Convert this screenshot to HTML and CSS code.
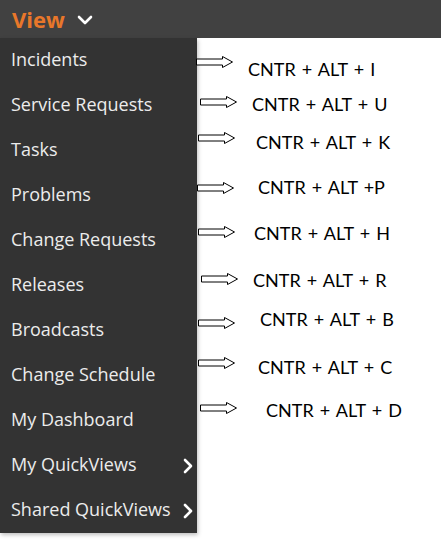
FILE: index.html
```html
<!DOCTYPE html>
<html>
<head>
<meta charset="utf-8">
<link rel="stylesheet" href="styles.css">
</head>
<body>
<header class="topbar">
  <span class="view-title">View</span>
  <svg class="chev-down" width="16" height="10" viewBox="0 0 16 10"><path d="M2 2 L8 8 L14 2" fill="none" stroke="#fff" stroke-width="2.6" stroke-linecap="round" stroke-linejoin="round"/></svg>
</header>
<div class="stage">
  <nav class="menu">
    <div class="item">Incidents</div>
    <div class="item">Service Requests</div>
    <div class="item">Tasks</div>
    <div class="item">Problems</div>
    <div class="item">Change Requests</div>
    <div class="item">Releases</div>
    <div class="item">Broadcasts</div>
    <div class="item">Change Schedule</div>
    <div class="item">My Dashboard</div>
    <div class="item sub">My QuickViews<svg class="chev-right" width="10" height="16" viewBox="0 0 10 16"><path d="M2 2 L8 8 L2 14" fill="none" stroke="#fff" stroke-width="2.6" stroke-linecap="round" stroke-linejoin="round"/></svg></div>
    <div class="item sub">Shared QuickViews<svg class="chev-right" width="10" height="16" viewBox="0 0 10 16"><path d="M2 2 L8 8 L2 14" fill="none" stroke="#fff" stroke-width="2.6" stroke-linecap="round" stroke-linejoin="round"/></svg></div>
  </nav>
  <section class="notes">
    <div class="note r1"><svg class="arrow" width="37" height="12" viewBox="0 0 37 12"><path d="M0.5 3 H26.5 V0.5 L36.5 6 L26.5 11.5 V9 H0.5 Z" fill="#fff" stroke="#000" stroke-width="1"/></svg><span class="keys">CNTR + ALT + I</span></div>
    <div class="note r2"><svg class="arrow" width="37" height="12" viewBox="0 0 37 12"><path d="M0.5 3 H26.5 V0.5 L36.5 6 L26.5 11.5 V9 H0.5 Z" fill="#fff" stroke="#000" stroke-width="1"/></svg><span class="keys">CNTR + ALT + U</span></div>
    <div class="note r3"><svg class="arrow" width="37" height="12" viewBox="0 0 37 12"><path d="M0.5 3 H26.5 V0.5 L36.5 6 L26.5 11.5 V9 H0.5 Z" fill="#fff" stroke="#000" stroke-width="1"/></svg><span class="keys">CNTR + ALT + K</span></div>
    <div class="note r4"><svg class="arrow" width="37" height="12" viewBox="0 0 37 12"><path d="M0.5 3 H26.5 V0.5 L36.5 6 L26.5 11.5 V9 H0.5 Z" fill="#fff" stroke="#000" stroke-width="1"/></svg><span class="keys">CNTR + ALT +P</span></div>
    <div class="note r5"><svg class="arrow" width="37" height="12" viewBox="0 0 37 12"><path d="M0.5 3 H26.5 V0.5 L36.5 6 L26.5 11.5 V9 H0.5 Z" fill="#fff" stroke="#000" stroke-width="1"/></svg><span class="keys">CNTR + ALT + H</span></div>
    <div class="note r6"><svg class="arrow" width="37" height="12" viewBox="0 0 37 12"><path d="M0.5 3 H26.5 V0.5 L36.5 6 L26.5 11.5 V9 H0.5 Z" fill="#fff" stroke="#000" stroke-width="1"/></svg><span class="keys">CNTR + ALT + R</span></div>
    <div class="note r7"><svg class="arrow" width="37" height="12" viewBox="0 0 37 12"><path d="M0.5 3 H26.5 V0.5 L36.5 6 L26.5 11.5 V9 H0.5 Z" fill="#fff" stroke="#000" stroke-width="1"/></svg><span class="keys">CNTR + ALT + B</span></div>
    <div class="note r8"><svg class="arrow" width="37" height="12" viewBox="0 0 37 12"><path d="M0.5 3 H26.5 V0.5 L36.5 6 L26.5 11.5 V9 H0.5 Z" fill="#fff" stroke="#000" stroke-width="1"/></svg><span class="keys">CNTR + ALT + C</span></div>
    <div class="note r9"><svg class="arrow" width="37" height="12" viewBox="0 0 37 12"><path d="M0.5 3 H26.5 V0.5 L36.5 6 L26.5 11.5 V9 H0.5 Z" fill="#fff" stroke="#000" stroke-width="1"/></svg><span class="keys">CNTR + ALT + D</span></div>
  </section>
</div>
</body>
</html>
```
FILE: styles.css
```css
html, body {
  margin: 0;
  padding: 0;
  background: #fff;
  width: 441px;
  height: 557px;
  overflow: hidden;
}

.topbar {
  height: 38px;
  background: #414141;
  display: flex;
  align-items: center;
  padding-left: 12px;
  gap: 12px;
  box-sizing: border-box;
}

.view-title {
  font-family: "Open Sans", sans-serif;
  font-weight: 700;
  font-size: 22px;
  line-height: 38px;
  color: #e8772a;
}

.chev-down {
  margin-top: 2px;
}

.stage {
  display: flex;
  align-items: flex-start;
}

.menu {
  width: 197px;
  flex: none;
  background: #333333;
  box-shadow: 1px 2px 4px rgba(0, 0, 0, 0.25);
  display: flex;
  flex-direction: column;
}

.item {
  height: 45px;
  box-sizing: border-box;
  display: flex;
  align-items: center;
  justify-content: space-between;
  padding: 0 4px 3px 11px;
  font-family: "Open Sans", sans-serif;
  font-size: 18px;
  color: #ececec;
  white-space: nowrap;
}

.chev-right {
  margin-top: 3px;
}

.notes {
  display: flex;
  flex-direction: column;
}

.note {
  display: flex;
  align-items: flex-start;
  height: 20px;
}

.arrow {
  flex: none;
}

.keys {
  font-family: "Lato", sans-serif;
  font-size: 18px;
  word-spacing: 1.5px;
  line-height: 20px;
  color: #000;
  white-space: nowrap;
}

/* text centre -> row top = centre - 10; arrow offset = arrow centre - text centre + 4 */
.r1 { margin-top: 21px; }
.r1 .arrow { margin-left: -1px; margin-top: -3px; }
.r1 .keys { margin-left: 15px; }

.r2 { margin-top: 15px; }
.r2 .arrow { margin-left: 3px; margin-top: 2px; }
.r2 .keys { margin-left: 15px; }

.r3 { margin-top: 18px; }
.r3 .arrow { margin-left: 1px; margin-top: 0px; }
.r3 .keys { margin-left: 21px; }

.r4 { margin-top: 25px; }
.r4 .arrow { margin-left: 0px; margin-top: 5px; }
.r4 .keys { margin-left: 24px; }

.r5 { margin-top: 26px; }
.r5 .arrow { margin-left: 1px; margin-top: 3px; }
.r5 .keys { margin-left: 19px; }

.r6 { margin-top: 27px; }
.r6 .arrow { margin-left: 4px; margin-top: 3px; }
.r6 .keys { margin-left: 15px; }

.r7 { margin-top: 19px; }
.r7 .arrow { margin-left: 1px; margin-top: 8px; }
.r7 .keys { margin-left: 25px; }

.r8 { margin-top: 28px; }
.r8 .arrow { margin-left: 1px; margin-top: 0px; }
.r8 .keys { margin-left: 23px; }

.r9 { margin-top: 23px; }
.r9 .arrow { margin-left: 3px; margin-top: 2px; }
.r9 .keys { margin-left: 29px; }
```
